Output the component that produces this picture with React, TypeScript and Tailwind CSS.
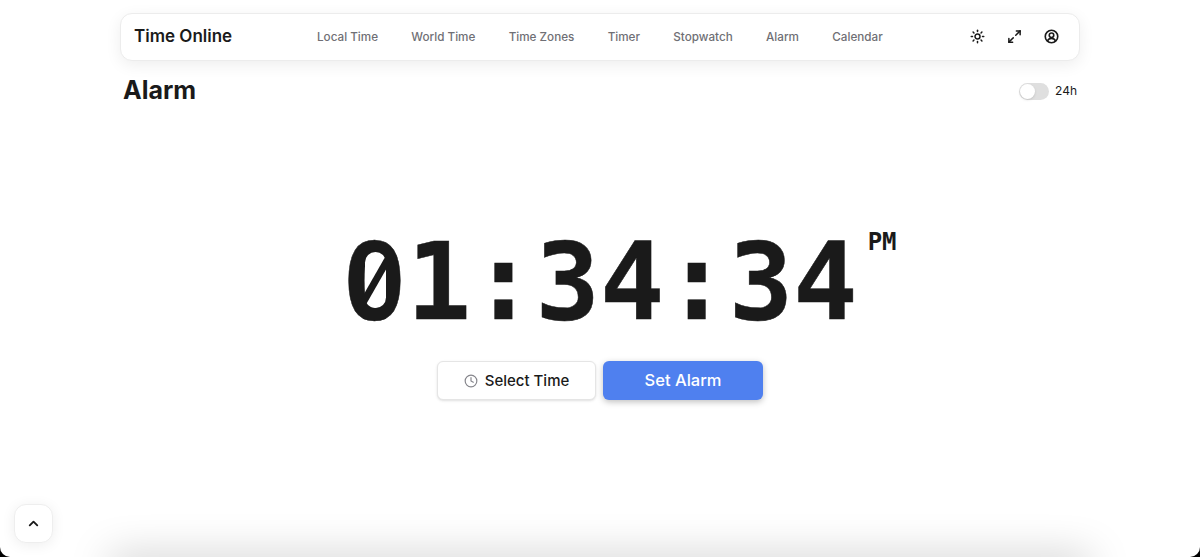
import { ChevronUp, Clock, Maximize2, Sun } from "lucide-react";

const links = ["Local Time", "World Time", "Time Zones", "Timer", "Stopwatch", "Alarm", "Calendar"];

const UserCircle = () => (
  <svg width="15" height="15" viewBox="0 0 24 24" fill="none" stroke="currentColor" strokeWidth="2.6">
    <circle cx="12" cy="12" r="10" />
    <circle cx="12" cy="10" r="3.6" />
    <path d="M5.5 19c1.5-3 3.8-4 6.5-4s5 1 6.5 4" />
  </svg>
);

// the reference font has a slashed zero, DejaVu a dotted one
const ZeroSlash = () => (
  <svg className="absolute top-0 left-0" width="64" height="124" viewBox="0 0 64 124">
    <rect x="23" y="32" width="21" height="56" rx="10.5" fill="#fff" />
    <path d="M50 32 18 88" stroke="#1a1a1a" strokeWidth="7" />
  </svg>
);

const App = () => {
  return (
    <div className="h-[557px] bg-black">
      <div className="relative flex h-[557px] flex-col overflow-hidden rounded-b-[10px] bg-white font-['Inter',sans-serif] text-[#1a1a1a]">
        <div className="mx-auto w-[960px] pt-[13px]">
          <header className="flex h-[48px] items-center rounded-xl border border-[#ececec] bg-white pl-[13px] pr-[20px] shadow-[0_4px_16px_rgba(0,0,0,0.07)]">
            <div className="w-[183px] text-[17px] font-semibold">Time Online</div>
            <nav className="flex gap-[33.3px] pt-[1px] text-[11.7px] font-medium text-[#6f6f75]">
              {links.map((link) => (
                <span key={link}>{link}</span>
              ))}
            </nav>
            <div className="mb-[2px] ml-auto flex items-center gap-[22px]">
              <Sun size={15} strokeWidth={2.4} />
              <Maximize2 size={15} strokeWidth={2.4} />
              <UserCircle />
            </div>
          </header>
          <div className="flex items-center justify-between pl-[3px] pr-[3px] pt-[12px]">
            <h1 className="text-[25px] leading-[34px] font-bold">Alarm</h1>
            <div className="flex items-center gap-[6px] pt-[2px] text-[12px]">
              <span className="flex h-[17px] w-[30px] items-center rounded-full bg-[#dfdfdf] pl-[1px]">
                <span className="h-[15px] w-[15px] rounded-full bg-white shadow-sm" />
              </span>
              24h
            </div>
          </div>
        </div>

        <main className="flex flex-col items-center pt-[113px]">
          <div className="relative">
            <div className="font-['DejaVu_Sans_Mono',monospace] text-[107px] leading-[124px] font-bold [-webkit-text-stroke:0.5px_#1a1a1a]">01:34:34</div>
            <ZeroSlash />
            <div className="absolute top-[8px] left-full ml-[10px] font-['DejaVu_Sans_Mono',monospace] text-[24px] leading-[28px] font-bold">PM</div>
          </div>
          <div className="mt-[17px] flex gap-[7px] text-[16.5px] font-medium">
            <button className="flex h-[39px] w-[159px] items-center justify-center gap-[7px] rounded-md border border-[#e5e5e5] bg-white pt-[1px] text-[15px] shadow-sm">
              <Clock size={14} className="text-[#85858b]" />
              Select Time
            </button>
            <button className="h-[39px] w-[160px] rounded-md bg-[#4f80ef] text-white shadow-[0_2px_6px_rgba(0,0,0,0.25)]">
              Set Alarm
            </button>
          </div>
        </main>

        <button className="absolute bottom-[14px] left-[14px] flex h-[39px] w-[39px] items-center justify-center rounded-xl border border-[#eeeeee] bg-white shadow-[0_2px_14px_rgba(0,0,0,0.07)]">
          <ChevronUp size={15} strokeWidth={3} />
        </button>
        <div className="absolute -bottom-[20px] left-[110px] right-[110px] h-[20px] bg-white shadow-[0_0_40px_rgba(0,0,0,0.25)]" />
      </div>
    </div>
  );
};

export default App;
